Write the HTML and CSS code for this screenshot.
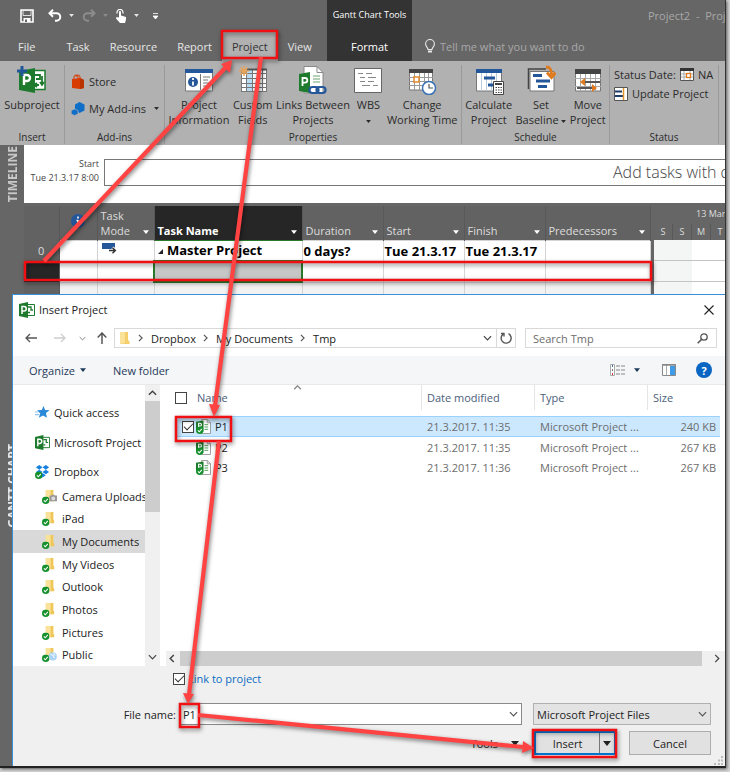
FILE: index.html
```html
<!DOCTYPE html>
<html lang="en">
<head>
<meta charset="utf-8">
<title>Project2 - Project Professional</title>
<link rel="stylesheet" href="styles.css">
</head>
<body>
<svg class="defs" aria-hidden="true">
  <symbol id="caret" viewBox="0 0 8 5"><path d="M0 0h8L4 5z" fill="currentColor"/></symbol>
  <symbol id="chev-down" viewBox="0 0 10 6"><path d="M1 1l4 4 4-4" fill="none" stroke="currentColor" stroke-width="1.3"/></symbol>
  <symbol id="chev-up" viewBox="0 0 10 6"><path d="M1 5l4-4 4 4" fill="none" stroke="currentColor" stroke-width="1.6"/></symbol>
  <symbol id="chev-right" viewBox="0 0 6 10"><path d="M1 1l4 4-4 4" fill="none" stroke="currentColor" stroke-width="1.4"/></symbol>
  <symbol id="chev-left" viewBox="0 0 6 10"><path d="M5 1L1 5l4 4" fill="none" stroke="currentColor" stroke-width="1.6"/></symbol>
  <symbol id="project" viewBox="0 0 16 16">
    <path d="M8 2.5h7.5v11H8z" fill="#fff" stroke="#1e7a2c"/>
    <path d="M9 5h3v3h2M9 10.500h2" fill="none" stroke="#1e7a2c" stroke-width="1.3"/>
    <path d="M0 2l9-2v16l-9-2z" fill="#1e7a2c"/>
    <path d="M3 12V4.500h2a2.200 2.200 0 0 1 0 4.500H3" fill="none" stroke="#fff" stroke-width="1.5"/>
  </symbol>
  <symbol id="tick" viewBox="0 0 8 8"><circle cx="4" cy="4" r="4" fill="#14902c"/><path d="M2 4.200l1.500 1.400L6.200 2.500" fill="none" stroke="#fff" stroke-width="1.100"/></symbol>
  <symbol id="folder" viewBox="0 0 16 16">
    <path d="M4 1h8v12H4z" fill="#f9dc83"/><path d="M9 1h3v8l1 1v3H9z" fill="#efc65a"/><path d="M4 1h5v12l-5 1z" fill="#fbe29a"/>
    <use href="#tick" x="0" y="8" width="8" height="8"/>
  </symbol>
  <symbol id="mpp" viewBox="0 0 16 16">
    <path d="M6 .5h6l3.500 3.500v11.500H6z" fill="#fff" stroke="#999"/><path d="M12 .5V4h3.500" fill="none" stroke="#999"/>
    <path d="M9 6h4M9 8.500h4M9 11h4" stroke="#4b9a55"/>
    <path d="M0 3l8-1.500v12L0 12z" fill="#1e7a2c"/>
    <path d="M2.800 9V4.500h1.500a1.500 1.500 0 0 1 0 3H2.800" fill="none" stroke="#fff" stroke-width="1.200"/>
    <use href="#tick" x="0" y="8" width="8" height="8"/>
  </symbol>
</svg>

<main class="app">
  <header class="titlebar">
    <div class="title-left">
      <div class="quick-tools">
        <button class="plain" aria-label="Save"><svg width="14" height="14" viewBox="0 0 14 14"><path d="M1 1h12v12H1z" fill="none" stroke="#fff" stroke-width="1.600"/><path d="M3 1.500h8v5H3z" fill="#666" stroke="#fff" stroke-width=".8"/><path d="M3.500 9h7v4h-7z" fill="#fff"/><path d="M5 10.500h2V13H5z" fill="#666"/></svg></button>
        <button class="plain undo" aria-label="Undo"><svg width="14" height="13" viewBox="0 0 14 13"><path d="M5 .8L1.500 4.200 5 7.800M2 4.200h6.500a3.700 3.700 0 0 1 0 7.500H7" fill="none" stroke="#fff" stroke-width="2"/></svg><svg class="caret"><use href="#caret"/></svg></button>
        <button class="plain redo" aria-label="Redo"><svg width="14" height="13" viewBox="0 0 14 13"><path d="M9 .8l3.500 3.400L9 7.800M12 4.200H5.500a3.700 3.700 0 0 0 0 7.500H7" fill="none" stroke="currentColor" stroke-width="2"/></svg><svg class="caret"><use href="#caret"/></svg></button>
        <button class="plain touch" aria-label="Touch mode"><svg width="12" height="14" viewBox="0 0 12 14"><path d="M4 3v5.500L1.500 8 1 9.500 5 14h5l1-3.500V8L6 6.500V3a1 1 0 0 0-2 0z" fill="#fff"/><path d="M2.200 4.500a3 3 0 1 1 5.600 0" fill="none" stroke="#fff" stroke-width="1.200"/></svg><svg class="caret"><use href="#caret"/></svg></button>
        <button class="plain customize" aria-label="Customize"><svg width="5" height="6" viewBox="0 0 5 6"><path d="M0 .5h5M0 3h5L2.500 6z" stroke="#fff" stroke-width=".8" fill="#fff"/></svg></button>
      </div>
      <nav class="tabs">
        <a href="#" class="file">File</a><a href="#">Task</a><a href="#">Resource</a><a href="#">Report</a><a href="#" class="active">Project</a><a href="#">View</a>
      </nav>
    </div>
    <div class="context-tab"><span>Gantt Chart Tools</span><a href="#">Format</a></div>
    <div class="title-right">
      <div class="doc-title">Project2&nbsp; -&nbsp; Project Professional</div>
      <div class="tell-me"><svg width="10" height="14" viewBox="0 0 10 14"><path d="M3 10.500c0-2-2.400-3-2.400-5.600a4.400 4.400 0 0 1 8.800 0C9.400 7.500 7 8.500 7 10.500z" fill="none" stroke="#e8e8e8" stroke-width="1.100"/><path d="M3 11.500h4v2H3z" fill="#e8e8e8"/></svg>Tell me what you want to do</div>
    </div>
  </header>

  <section class="ribbon">
    <div class="group g-insert">
      <div class="tools">
        <button class="big"><svg width="30" height="30" viewBox="0 0 30 30"><path d="M14 5.500h14v19H14z" fill="#fff" stroke="#1e7a2c" stroke-width="1.500"/><path d="M18 10h5v4h-4m6-3v7m-2-1l2 3 2-3M22 20h-4m2-2l-3 2 3 2" fill="none" stroke="#1e7a2c" stroke-width="1.800"/><path d="M2 6l16-3v25L2 25z" fill="#1e7a2c"/><path d="M7 20V10h3a3 3 0 0 1 0 6H7" fill="none" stroke="#fff" stroke-width="2.400"/><path d="M0 6h10M5 1v10" stroke="#24569a" stroke-width="3"/></svg><span>Subproject</span></button>
      </div>
      <h2>Insert</h2>
    </div>
    <div class="group g-addins">
      <div class="tools list">
        <button class="small"><svg width="14" height="16" viewBox="0 0 14 16"><path d="M1 5l8-1 4 2v8l-4 1-8-1z" fill="#d83b01"/><path d="M9 4l4 2v8l-4 1z" fill="#b93300"/><path d="M3 5V3a2 2 0 0 1 4 0v2M5 3a2 2 0 0 1 4 0v2" fill="none" stroke="#d83b01"/></svg>Store</button>
        <button class="small"><svg width="14" height="14" viewBox="0 0 14 14"><path d="M8.500 0l5 2.500v6L8.500 11 4 8.500v-6z" fill="#0f6fc8"/><path d="M3.500 7L7 8.500v3.500L3.500 13.500.2 12V8.500z" fill="#0f6fc8" stroke="#b1b1b1" stroke-width=".7"/></svg>My Add-ins<svg class="caret gap"><use href="#caret"/></svg></button>
      </div>
      <h2>Add-ins</h2>
    </div>
    <div class="group g-props">
      <div class="tools">
        <button class="big"><svg width="30" height="30" viewBox="0 0 30 30"><path d="M1.500 5h27v21h-27z" fill="#fff" stroke="#777"/><path d="M1 4h28v4H1z" fill="#24569a"/><circle cx="9" cy="17" r="5" fill="#24569a"/><path d="M9 13v2m0 1.500v4" stroke="#fff" stroke-width="1.800"/><path d="M16.500 9v16M19 12h7M19 15h5M19 18h7M19 21h5" stroke="#777"/></svg><span>Project<br>Information</span></button>
        <button class="big"><svg width="30" height="30" viewBox="0 0 30 30"><path d="M3 5h26v22H3z" fill="#fff"/><path d="M9 5h5v22H9z" fill="#b9dcf5"/><path d="M3.500 5v22M8.500 5v22M14.500 5v22M19.500 5v22M24.500 5v22M28.500 5v22M3 8.500h26M3 13.500h26M3 18.500h26M3 22.500h26M3 26.500h26" stroke="#777"/><path d="M9 4.500h20" stroke="#555" stroke-width="2"/><path d="M6 1v10M1 6h10M2.500 2.500l7 7M9.500 2.500l-7 7" stroke="#e6a45a" stroke-width="1.500"/></svg><span>Custom<br>Fields</span></button>
        <button class="big"><svg width="30" height="30" viewBox="0 0 30 30"><path d="M6 1.500h13l6 6V28H6z" fill="#fff" stroke="#888"/><path d="M19 1.500v6h6" fill="none" stroke="#888"/><path d="M15 11h7M15 14h7M15 17h7" stroke="#6aa371"/><path d="M1 9l11-2v21L1 26z" fill="#1e7a2c"/><path d="M4.500 21v-8h2.500a2.300 2.300 0 0 1 0 4.600H5" fill="none" stroke="#fff" stroke-width="1.800"/><rect x="11.500" y="22" width="9" height="6" rx="3" fill="none" stroke="#24569a" stroke-width="2.200"/><rect x="18.500" y="22" width="9" height="6" rx="3" fill="none" stroke="#24569a" stroke-width="2.200"/></svg><span>Links Between<br>Projects</span></button>
        <button class="big"><svg width="30" height="30" viewBox="0 0 30 30"><path d="M1.500 3.500h27v24h-27z" fill="#fff" stroke="#666"/><path d="M5 8.500h5M7 12.500h5M7 16.500h5M9 20.500h8M13 8.500h6M15 12.500h8M15 16.500h6M20 20.500h5" stroke="#888"/></svg><span>WBS<br><svg class="caret"><use href="#caret"/></svg></span></button>
        <button class="big"><svg width="30" height="30" viewBox="0 0 30 30"><path d="M2.500 5h23v20h-23z" fill="#fff" stroke="#777"/><path d="M2 4h24v4H2z" fill="#444"/><path d="M7.500 8v17M12.500 8v17M17.500 8v17M21.500 8v17M2 12.500h24M2 16.500h24M2 20.500h24" stroke="#999"/><rect x="7" y="12" width="5" height="5" fill="#fff" stroke="#e08a2c" stroke-width="1.500"/><circle cx="22" cy="23" r="6.500" fill="#fff" stroke="#3b73b4" stroke-width="1.500"/><path d="M22 19v4h4" fill="none" stroke="#555" stroke-width="1.200"/></svg><span>Change<br>Working Time</span></button>
      </div>
      <h2>Properties</h2>
    </div>
    <div class="group g-schedule">
      <div class="tools">
        <button class="big"><svg width="30" height="30" viewBox="0 0 30 30"><path d="M2.500 5h25v21h-25z" fill="#fff" stroke="#777"/><path d="M2 4h26v4H2z" fill="#24569a"/><path d="M7.500 8v18M12.500 8v18M17.500 8v18M22.500 8v18" stroke="#bcd"/><path d="M10 13h11M14 20h7" stroke="#24569a" stroke-width="3"/><path d="M19.500 16.500h10v13h-10z" fill="#fff" stroke="#444"/><path d="M21 19h7" stroke="#444" stroke-width="2"/><path d="M21.500 22.500h7M21.500 25h7M21.500 27.500h7" stroke="#444" stroke-dasharray="1.500 1"/></svg><span>Calculate<br>Project</span></button>
        <button class="big"><svg width="30" height="30" viewBox="0 0 30 30"><path d="M2.500 24V4H20" fill="none" stroke="#444" stroke-width="1.500"/><path d="M4 6.500h24V26H4z" fill="#fff" stroke="#777"/><path d="M7 10.500h9M10 16h14M12 21.500h9" stroke="#24569a" stroke-width="3.200"/><path d="M20 2c4 0 5.500 2 5.500 8M21 7.500l4.500 5 4-5" fill="none" stroke="#e07a1f" stroke-width="3"/></svg><span>Set<br>Baseline <svg class="caret"><use href="#caret"/></svg></span></button>
        <button class="big"><svg width="30" height="30" viewBox="0 0 30 30"><path d="M2.500 5h25v21h-25z" fill="#fff" stroke="#777"/><path d="M2 4h26v5H2z" fill="#444"/><path d="M7.500 9v17M12.500 9v17M17.500 9v17M22.500 9v17M2 13.500h26M2 21.500h26" stroke="#aaa"/><path d="M11 17h16M4 23h16" stroke="#555" stroke-width="2"/><path d="M12 13v8l-5-4zM19 19v8l5-4z" fill="#e07a1f"/></svg><span>Move<br>Project</span></button>
      </div>
      <h2>Schedule</h2>
    </div>
    <div class="group g-status">
      <div class="tools list">
        <button class="small">Status Date:<svg width="14" height="13" viewBox="0 0 14 13"><path d="M.5.500h13v12H.5z" fill="#fff" stroke="#555"/><path d="M0 0h14v3H0z" fill="#333"/><path d="M4 3v9M10 3v9M1 6h12M1 9h12" stroke="#aaa"/><rect x="6.500" y="5.500" width="4" height="4" fill="#fff" stroke="#e07a1f" stroke-width="1.300"/></svg>NA</button>
        <button class="small"><svg width="14" height="14" viewBox="0 0 14 14"><path d="M.5.500h13v13H.5z" fill="#fff" stroke="#555"/><path d="M1 4.500h7M1 9h9" stroke="#1f3d6b" stroke-width="2"/><path d="M9.500 1v12" stroke="#e0962c" stroke-width="1.500"/></svg>Update Project</button>
      </div>
      <h2>Status</h2>
    </div>
    <div class="group g-next"><div class="tools"></div></div>
  </section>

  <section class="timeline">
    <h2 class="side-label"><span>TIMELINE</span></h2>
    <div class="timeline-view">
      <p>Start<br>Tue 21.3.17 8:00</p>
      <div class="timeline-bar">Add tasks with dates to the timeline</div>
    </div>
  </section>

  <section class="workspace">
    <h2 class="side-label"><span>GANTT CHART</span></h2>
    <table class="sheet">
      <colgroup><col class="c-id"><col class="c-info"><col class="c-mode"><col class="c-name"><col class="c-dur"><col class="c-dur"><col class="c-dur"><col class="c-pred"></colgroup>
      <thead><tr>
        <th></th>
        <th class="center"><svg width="14" height="14" viewBox="0 0 14 14"><circle cx="7" cy="7" r="7" fill="#24569a"/><path d="M7 2.500v2M7 6v5M5.500 6.500H7" stroke="#fff" stroke-width="1.600"/></svg></th>
        <th><div>Task<br>Mode<svg class="caret"><use href="#caret"/></svg></div></th>
        <th class="picked"><div>Task Name<svg class="caret"><use href="#caret"/></svg></div></th>
        <th><div>Duration<svg class="caret"><use href="#caret"/></svg></div></th>
        <th><div>Start<svg class="caret"><use href="#caret"/></svg></div></th>
        <th><div>Finish<svg class="caret"><use href="#caret"/></svg></div></th>
        <th><div>Predecessors<svg class="caret"><use href="#caret"/></svg></div></th>
      </tr></thead>
      <tbody>
        <tr><th>0</th><td></td><td><svg class="mode" width="15" height="11" viewBox="0 0 15 11"><path d="M0 0h13v6H0z" fill="#24569a"/><path d="M7 7.500h6M10.500 4.500l3 3-3 3" fill="none" stroke="#fff" stroke-width="3"/><path d="M7 7.500h6M10.500 4.800l2.800 2.700-2.800 2.700" fill="none" stroke="#333" stroke-width="1.500"/></svg></td><td><svg class="twist" width="5" height="5" viewBox="0 0 5 5"><path d="M5 0v5H0z" fill="#222"/></svg> Master Project</td><td>0 days?</td><td>Tue 21.3.17</td><td>Tue 21.3.17</td><td></td></tr>
        <tr><th class="current"></th><td></td><td></td><td class="cell"></td><td></td><td></td><td></td><td></td></tr>
        <tr class="shade"><th></th><td></td><td></td><td></td><td></td><td></td><td></td><td></td></tr>
      </tbody>
    </table>
    <div class="gantt">
      <div class="scale"><b>13 Mar '17</b><span>S</span><span>S</span><span>M</span><span>T</span></div>
      <div class="bars"></div><div class="bars"></div><div class="bars"></div>
    </div>
  </section>

  <section class="dialog" role="dialog" aria-labelledby="dlg-title">
    <header class="dlg-title">
      <svg width="16" height="16"><use href="#project"/></svg><h1 id="dlg-title">Insert Project</h1>
      <button class="plain" aria-label="Close"><svg width="10" height="10" viewBox="0 0 10 10"><path d="M.5.500l9 9M9.500.500l-9 9" stroke="#222" stroke-width="1.100"/></svg></button>
    </header>
    <div class="address-row">
      <button class="plain" aria-label="Back"><svg width="12" height="10" viewBox="0 0 12 10"><path d="M12 5H1M5 1L1 5l4 4" fill="none" stroke="#555" stroke-width="1.300"/></svg></button>
      <button class="plain forward" aria-label="Forward"><svg width="12" height="10" viewBox="0 0 12 10"><path d="M0 5h11M7 1l4 4-4 4" fill="none" stroke="#ccc" stroke-width="1.300"/></svg></button>
      <button class="plain recent" aria-label="Recent"><svg width="7" height="5"><use href="#chev-down"/></svg></button>
      <button class="plain up" aria-label="Up"><svg width="10" height="12" viewBox="0 0 10 12"><path d="M5 12V1M.7 5.500L5 1l4.300 4.500" fill="none" stroke="#555" stroke-width="1.500"/></svg></button>
      <div class="address">
        <svg width="10" height="12" viewBox="0 0 10 12"><path d="M0 0h8v8l1.500 1.500V12H0z" fill="#f5cf6b"/><path d="M0 0h5v11l-5 1z" fill="#fbe29a"/></svg>
        <svg class="sep"><use href="#chev-right"/></svg><a href="#">Dropbox</a>
        <svg class="sep"><use href="#chev-right"/></svg><a href="#">My Documents</a>
        <svg class="sep"><use href="#chev-right"/></svg><a href="#">Tmp</a>
        <svg class="drop" width="9" height="6"><use href="#chev-down"/></svg>
        <button class="refresh" aria-label="Refresh"><svg width="12" height="12" viewBox="0 0 12 12"><path d="M8.500 1.700A5 5 0 1 1 3 2.200M1 1.500h3v3" fill="none" stroke="#555" stroke-width="1.400"/></svg></button>
      </div>
      <label class="search"><input type="search" placeholder="Search Tmp" aria-label="Search Tmp"><svg width="11" height="11" viewBox="0 0 11 11"><circle cx="7" cy="4" r="3.200" fill="none" stroke="#555" stroke-width="1.300"/><path d="M4.700 6.300L.7 10.300" stroke="#555" stroke-width="1.600"/></svg></label>
    </div>
    <div class="command-bar">
      <button class="plain">Organize<svg class="caret"><use href="#caret"/></svg></button>
      <button class="plain new">New folder</button>
      <button class="plain view" aria-label="View"><svg width="15" height="12" viewBox="0 0 15 12"><path d="M.5.500h4v11h-4z" fill="#fff" stroke="#aaa"/><path d="M2 2h1" stroke="#3b73b4" stroke-width="2"/><path d="M2 6h1" stroke="#777" stroke-width="2"/><path d="M2 10h1" stroke="#c33" stroke-width="2"/><path d="M6 2h9M6 6h9M6 10h9" stroke="#888" stroke-dasharray="4 1"/></svg><svg class="caret"><use href="#caret"/></svg></button>
      <button class="plain" aria-label="Preview pane"><svg width="14" height="12" viewBox="0 0 14 12"><path d="M.5.500h13v11H.5z" fill="#fff" stroke="#888"/><path d="M4.500 1v10" stroke="#aaa"/><path d="M8 2h5v9H8z" fill="#3f9be6"/><path d="M0 1h14" stroke="#888" stroke-width="1.500"/></svg></button>
      <button class="plain help" aria-label="Help">?</button>
    </div>
    <div class="browser">
      <nav class="places">
        <a href="#" class="root"><svg width="14" height="14" viewBox="0 0 14 14"><path d="M8 1l1.400 3.700 4.300.3-3.500 2.500 1 4.500-3.700-2.300L3.500 12l1.400-4L2 5l4.300-.3z" fill="#2b8ad8"/><path d="M0 9h4M0 6.500h3" stroke="#8cc3f0"/></svg>Quick access</a>
        <a href="#" class="root"><svg><use href="#project"/></svg>Microsoft Project</a>
        <a href="#" class="root"><svg viewBox="0 0 16 16"><path d="M4.500 1L8 3.500 4.500 6 1 3.500zM11.500 1L15 3.500 11.500 6 8 3.500zM4.500 6L8 8.500 4.500 11 1 8.500zM11.500 6L15 8.500 11.500 11 8 8.500zM8 9.500l3.500 2.500L8 14.500 4.500 12z" fill="#1581dd"/><use href="#tick" x="0" y="8" width="8" height="8"/></svg>Dropbox</a>
        <a href="#"><svg viewBox="0 0 16 16"><use href="#folder" width="16" height="16"/><path d="M8 7h2l1-1h2l1 1h2v6H8z" fill="#999"/><circle cx="12" cy="10" r="2" fill="#ddd"/></svg>Camera Uploads</a>
        <a href="#"><svg><use href="#folder"/></svg>iPad</a>
        <a href="#" class="selected"><svg><use href="#folder"/></svg>My Documents</a>
        <a href="#"><svg><use href="#folder"/></svg>My Videos</a>
        <a href="#"><svg><use href="#folder"/></svg>Outlook</a>
        <a href="#"><svg><use href="#folder"/></svg>Photos</a>
        <a href="#"><svg><use href="#folder"/></svg>Pictures</a>
        <a href="#"><svg viewBox="0 0 16 16"><use href="#folder" width="16" height="16"/><circle cx="11.500" cy="10" r="4.300" fill="#a9d3f2"/><path d="M9 8l3 1 1 3M12 6l2 3" fill="none" stroke="#fff"/></svg>Public</a>
      </nav>
      <div class="vscroll"><svg width="9" height="6"><use href="#chev-up"/></svg><i></i><svg width="9" height="6"><use href="#chev-down"/></svg></div>
      <div class="files">
        <table>
          <colgroup><col><col class="f-date"><col class="f-date"><col class="f-size"></colgroup>
          <thead><tr><th><label><input type="checkbox">Name</label><svg class="sort" width="9" height="5"><use href="#chev-up"/></svg></th><th>Date modified</th><th>Type</th><th>Size</th></tr></thead>
          <tbody>
            <tr class="selected"><td><label><input type="checkbox" checked><svg width="15" height="15"><use href="#mpp"/></svg>P1</label></td><td>21.3.2017. 11:35</td><td>Microsoft Project ...</td><td>240 KB</td></tr>
            <tr><td><span><svg width="15" height="15"><use href="#mpp"/></svg>P2</span></td><td>21.3.2017. 11:35</td><td>Microsoft Project ...</td><td>267 KB</td></tr>
            <tr><td><span><svg width="15" height="15"><use href="#mpp"/></svg>P3</span></td><td>21.3.2017. 11:36</td><td>Microsoft Project ...</td><td>267 KB</td></tr>
          </tbody>
        </table>
        <div class="hscroll"><svg width="6" height="9"><use href="#chev-left"/></svg><i></i><svg width="6" height="9"><use href="#chev-right"/></svg></div>
      </div>
    </div>
    <form class="dlg-footer">
      <label class="link"><input type="checkbox" checked>Link to project</label>
      <div class="name-row">
        <label for="fname">File name:</label>
        <div class="field"><input id="fname" type="text" value="P1"><svg width="9" height="6"><use href="#chev-down"/></svg></div>
        <div class="field type"><select aria-label="File type"><option>Microsoft Project Files</option></select><svg width="9" height="6"><use href="#chev-down"/></svg></div>
      </div>
      <div class="action-row">
        <button type="button" class="plain tools-btn">Tools<svg class="caret"><use href="#caret"/></svg></button>
        <div class="split"><button type="button">Insert</button><button type="button" aria-label="Insert options"><svg class="caret"><use href="#caret"/></svg></button></div>
        <button type="button" class="cancel">Cancel</button>
      </div>
      <svg class="grip" width="9" height="9" viewBox="0 0 9 9"><path d="M7 0h2v2H7zM4 3.500h2v2H4zM7 3.500h2v2H7zM0 7h2v2H0zM4 7h2v2H4zM7 7h2v2H7z" fill="#bbb"/></svg>
    </form>
  </section>
</main>

<svg class="callouts" width="730" height="772" viewBox="0 0 730 772" aria-hidden="true">
  <g fill="none" stroke="#f00f12" stroke-width="2.500">
    <rect x="222" y="31" width="55" height="27"/>
    <rect x="25" y="262" width="626" height="18"/>
    <rect x="176" y="417" width="55" height="24"/>
    <rect x="180" y="704" width="19" height="23"/>
    <rect x="533" y="730" width="83" height="27"/>
  </g>
  <g stroke="#ff4343" stroke-width="4.200" fill="#ff4343">
    <path d="M44 261L226 67"/><path d="M261 57L215 406"/><path d="M219 441L189 695"/><path d="M198 715L523 747"/>
    <g stroke="none"><path d="M232 60l-2 13-9-9z"/><path d="M214 417l-5-13 11 1z"/><path d="M188 704l-5-11 11 1z"/><path d="M534 748l-12 5 1-12z"/></g>
  </g>
</svg>
</body>
</html>
```
FILE: styles.css
```css
* { box-sizing: border-box; }
html, body { height: 100%; }
body {
  margin: 0;
  background: #d4d4d4;
  color: #222;
  font: 11px/15px "Open Sans", "Noto Sans", sans-serif;
  overflow: hidden;
}
h1, h2, p { margin: 0; font-size: inherit; font-weight: normal; }
a { color: inherit; text-decoration: none; }
button, input, select { font: inherit; color: inherit; }
button { padding: 0; border: 0; background: none; }
svg { flex: none; }
.defs { position: absolute; width: 0; height: 0; }
.plain { display: flex; align-items: center; }
.caret { width: 5px; height: 3px; vertical-align: middle; }

.app {
  position: relative;
  display: flex;
  flex-direction: column;
  height: calc(100vh - 4px);
  margin-right: 4px;
  background: #666;
  border-right: 1px solid #333;
  border-bottom: 2px solid #222;
  box-shadow: 1px 1px 3px #555;
  overflow: hidden;
}

/* Title bar and tabs */
.titlebar { display: flex; height: 61px; background: #666; color: #e6e6e6; }
.title-left { width: 327px; }
.quick-tools { display: flex; align-items: center; height: 31px; padding-left: 20px; }
.quick-tools .caret { margin-left: 7px; }
.undo { margin-left: 14px; }
.redo { margin-left: 8px; color: #8c8c8c; }
.touch { margin-left: 7px; }
.customize { margin-left: 14px; }
.tabs { display: flex; height: 30px; padding-left: 8px; }
.tabs a { padding: 8px 10px 0; }
.tabs .file { margin-right: 11px; }
.tabs .active { background: #b1b1b1; color: #333; }
.context-tab {
  display: flex;
  flex-direction: column;
  align-items: center;
  width: 85px;
  background: #333;
  color: #fff;
  font-size: 9px;
  white-space: nowrap;
}
.context-tab span { height: 39px; padding-top: 7px; }
.context-tab a { font-size: 11px; }
.title-right { flex: 1; min-width: 0; padding-left: 13px; color: #a8a8a8; }
.doc-title { height: 39px; padding: 8px 0 0 223px; white-space: nowrap; overflow: hidden; }
.tell-me { display: flex; gap: 5px; }

/* Ribbon */
.ribbon { display: flex; height: 84px; background: #b1b1b1; color: #2b2b2b; overflow: hidden; }
.group { display: flex; flex-direction: column; flex: none; margin: 4px 0 1px; border-right: 1px solid #9a9a9a; }
.group h2 { text-align: center; font-size: 10px; line-height: 14px; }
.tools { display: flex; flex: 1; justify-content: space-evenly; align-items: flex-start; white-space: nowrap; }
.tools.list { flex-direction: column; justify-content: flex-start; }
.g-insert { width: 65px; }
.g-addins { width: 100px; }
.g-props { width: 297px; }
.g-schedule { width: 148px; }
.g-status { width: 109px; }
.g-next { flex: 1; border: 0; }
.big { display: flex; flex-direction: column; align-items: center; gap: 2px; }
.small { display: flex; align-items: center; gap: 4px; }
.g-addins .tools { padding-top: 3px; }
.g-addins .small { height: 27px; padding-left: 6px; }
.g-status .small { height: 19px; padding-left: 4px; }
.gap { margin-left: 4px; }

/* Timeline */
.side-label { display: flex; align-items: center; justify-content: center; width: 24px; background: #666; color: #c8c8c8; }
.side-label span { writing-mode: vertical-rl; transform: rotate(180deg); font-size: 12px; font-weight: 700; white-space: nowrap; }
.timeline { display: flex; height: 58px; }
.timeline-view { display: flex; flex: 1; min-width: 0; background: #fff; font-size: 9px; line-height: 14px; color: #444; }
.timeline-view p { width: 75px; padding-top: 12px; text-align: right; white-space: nowrap; }
.timeline-bar {
  flex: 1;
  min-width: 0;
  height: 27px;
  margin: 14px 0 0 5px;
  padding-left: 508px;
  border: 1px solid #777;
  border-right: 0;
  font: 16px/25px "Open Sans", sans-serif;
  font-weight: 300;
  white-space: nowrap;
  overflow: hidden;
}

/* Task sheet */
.workspace { display: flex; flex: 1; align-items: flex-start; padding-top: 3px; }
.workspace .side-label { height: 100%; color: #e8e8e8; }
.sheet { width: 627px; border-collapse: collapse; table-layout: fixed; background: #fff; border-right: 1px solid #ddd; }
.c-id { width: 35px; } .c-info { width: 38px; } .c-mode { width: 57px; } .c-name { width: 148px; } .c-dur { width: 81px; }
.sheet tr { height: 21px; }
.sheet thead tr { height: 34px; }
.sheet th { background: #626262; color: #ddd; font-weight: normal; border-right: 1px solid #585858; padding: 0 3px; }
.sheet thead th { vertical-align: bottom; text-align: left; }
.sheet thead .center { vertical-align: middle; text-align: center; }
.sheet thead div { display: flex; align-items: flex-end; justify-content: space-between; padding-bottom: 2px; }
.sheet thead .caret { width: 6px; height: 4px; margin: 0 2px 4px 0; color: #fff; }
.sheet thead .picked { background: #262626; color: #fff; font-weight: bold; border-bottom: 1px solid #2a7a2a; }
.sheet td { padding: 0 1px; border: 1px solid #d4d4d4; color: #000; font: bold 13px/18px "Open Sans", sans-serif; white-space: nowrap; overflow: hidden; }
.sheet .current { background: #262626; }
.sheet .cell { background: #c6c6c6; border: 2px solid #2a7a2a; }
.sheet .shade td { background: #f2f2f2; }
.mode { display: block; margin: 0 0 4px 3px; }
.twist { vertical-align: middle; margin: 0 1px 0 2px; }
.gantt { flex: 1; min-width: 0; margin-left: 3px; }
.scale { display: grid; grid-template-columns: repeat(4, 19px); height: 34px; color: #ddd; font-size: 9px; text-align: center; overflow: hidden; }
.scale b { grid-column: 3 / 5; height: 17px; padding-left: 4px; font-weight: normal; text-align: left; white-space: nowrap; }
.scale span { grid-row: 2; border-right: 1px solid #585858; }
.bars { height: 21px; border-bottom: 1px solid #c4c4c4; background: linear-gradient(90deg, #f4f5f5 38px, #fff 38px); }

/* Insert Project dialog */
.dialog {
  position: absolute;
  inset: 294px 0 0 12px;
  display: flex;
  flex-direction: column;
  background: #fff;
  border: 1px solid #3a8fd6;
  border-right: 0;
  border-bottom: 0;
}
.dlg-title { display: flex; align-items: center; gap: 4px; height: 29px; padding: 0 11px 0 6px; }
.dlg-title button { margin-left: auto; }
.address-row { display: flex; align-items: center; height: 32px; padding: 4px 8px 8px 12px; }
.address-row > .plain { margin-right: 17px; }
.address-row > .forward { margin-right: 13px; }
.address-row > .recent { margin-right: 11px; color: #777; }
.address-row > .up { margin-right: 7px; }
.address { display: flex; align-items: center; flex: 1; height: 20px; padding-left: 5px; border: 1px solid #d9d9d9; white-space: nowrap; }
.address a { margin-left: 8px; }
.sep { width: 5px; height: 8px; margin-left: 8px; color: #555; }
.address a + .sep { margin-left: 7px; }
.drop { margin-left: auto; color: #444; }
.refresh { display: flex; align-items: center; justify-content: center; width: 19px; height: 18px; margin-left: 4px; border-left: 1px solid #d9d9d9; }
.search { display: flex; align-items: center; width: 192px; height: 20px; margin-left: 9px; padding: 0 8px 0 7px; border: 1px solid #d9d9d9; }
.search input { flex: 1; min-width: 0; padding: 0; border: 0; background: none; }
.search input::placeholder { color: #6d6d6d; }
.command-bar { display: flex; align-items: center; height: 29px; padding: 0 13px 0 16px; background: #f5f6f7; border-bottom: 1px solid #e8e9ea; color: #1e395b; }
.command-bar .caret { width: 6px; height: 4px; margin-left: 5px; }
.new { margin-left: 27px; }
.view { margin: 0 22px 0 auto; }
.view .caret { margin-left: 9px; }
.command-bar .help { justify-content: center; width: 16px; height: 16px; margin-left: 20px; border-radius: 8px; background: #0a66c2; color: #fff; font-weight: bold; }

.browser { display: flex; flex: 1; min-height: 0; }
.places { display: flex; flex-direction: column; width: 132px; padding-top: 12px; overflow: hidden; }
.places a { display: flex; flex: 1; align-items: center; gap: 5px; padding-left: 29px; white-space: nowrap; }
.places .root { flex: 0 0 30px; padding-left: 22px; gap: 4px; }
.places .root:nth-child(3) { flex-basis: 28px; }
.places svg { width: 15px; height: 15px; }
.places .selected { background: #d9d9d9; }
.vscroll { display: flex; flex-direction: column; align-items: center; width: 15px; padding: 5px 0 6px; background: #f0f0f0; }
.vscroll i { width: 100%; height: 111px; margin: 5px 0 auto; background: #cdcdcd; }
.vscroll svg, .hscroll svg { color: #444; }
.files { display: flex; flex-direction: column; justify-content: space-between; flex: 1; min-width: 0; margin-left: 6px; }
.files table { table-layout: fixed; border-collapse: separate; border-spacing: 0; width: calc(100% - 14px); margin-left: 9px; color: #6d6d6d; white-space: nowrap; }
.f-date { width: 113px; }
.f-size { width: 73px; }
.files th { height: 25px; padding: 0 0 0 5px; border-left: 1px solid #e5e5e5; color: #4c607a; font-weight: normal; text-align: left; }
.files th:first-child { position: relative; padding: 0; border: 0; }
.sort { position: absolute; top: 0; left: 118px; color: #888; }
.files label, .files td span { display: flex; align-items: center; color: #222; }
.files th label { gap: 10px; color: #4c607a; }
.files tbody::before { content: ""; display: block; height: 6px; }
.files td { height: 20px; padding: 0 0 0 6px; }
.files td:last-child { padding: 0 4px 0 0; text-align: right; }
.files td:first-child { padding-left: 21px; }
.files td svg { margin-right: 4px; }
.files .selected td { height: 21px; background: #cce8ff; border: solid #99d1ff; border-width: 1px 0; }
.files .selected td:first-child { padding-left: 7px; }
.files td input { margin-right: 2px; }
input[type="checkbox"] { appearance: none; display: grid; place-items: center; flex: none; width: 12px; height: 12px; margin: 0; border: 1px solid #444; background: #fff; }
input[type="checkbox"]:checked::before { content: ""; width: 8px; height: 4px; margin-bottom: 3px; border: solid #333; border-width: 0 0 1px 1px; transform: rotate(-45deg); }
.hscroll { display: flex; align-items: center; height: 15px; padding: 0 5px 0 3px; background: #f0f0f0; }
.hscroll i { flex: 1; height: 100%; margin: 0 12px 0 5px; background: #cdcdcd; }

.dlg-footer { position: relative; height: 100px; padding: 5px 14px 0 0; background: #f0f0f0; }
.link { display: flex; align-items: center; gap: 3px; margin-left: 160px; color: #0b6cc2; }
.name-row { display: flex; align-items: center; margin-top: 17px; }
.name-row > label { width: 166px; padding-right: 3px; text-align: right; }
.field { display: grid; flex: 1; align-items: center; height: 22px; background: #fff; border: 1px solid #8a8a8a; }
.field > * { grid-area: 1 / 1; }
.field > svg { justify-self: end; margin-right: 3px; color: #555; pointer-events: none; }
.field input, .field select { appearance: none; width: 100%; min-width: 0; padding: 0 3px; border: 0; outline: 0; background: none; }
.field.type { flex: none; width: 178px; margin-left: 11px; background: #e3e3e3; border-color: #b0b0b0; }
.action-row { display: flex; align-items: center; margin-top: 6px; }
.tools-btn { margin-left: auto; }
.tools-btn .caret { width: 8px; height: 5px; margin-left: 13px; }
.split { display: flex; width: 82px; height: 24px; margin-left: 15px; border: 2px solid #0078d7; background: #e1e1e1; }
.split button { flex: 1; }
.split button + button { flex: none; width: 15px; border-left: 1px solid #777; }
.split .caret { width: 8px; height: 5px; display: block; margin: auto; }
.cancel { width: 82px; height: 24px; margin-left: 13px; background: #e1e1e1; border: 1px solid #adadad; }
.grip { position: absolute; right: 2px; bottom: 1px; }

.callouts { position: absolute; top: 0; left: 0; pointer-events: none; filter: drop-shadow(1px 2px 2px rgba(0, 0, 0, .5)); }
```
